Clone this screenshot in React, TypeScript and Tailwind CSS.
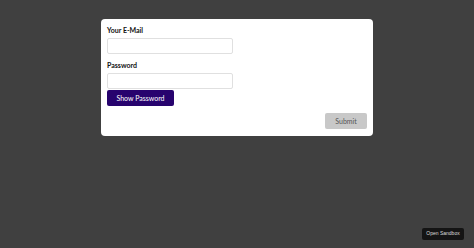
import React from "react";

export default function App() {
  return (
    <div
      className="relative min-h-[248px] w-full bg-[#404040] pt-[19px]"
      style={{ fontFamily: 'Lato, "Noto Sans", sans-serif' }}
    >
      <div className="mx-auto w-[272px] rounded-[4px] bg-white px-[6px] pt-[6px] pb-[7px]">
        <div className="flex flex-col items-start">
          <label className="text-[7px] font-bold leading-[10px] text-[#111]">Your E-Mail</label>
          <input className="mt-[3px] h-[16px] w-[126px] rounded-[2px] border border-[#e0e0e0] bg-white" />
          <label className="mt-[6px] text-[7px] font-bold leading-[10px] text-[#111]">Password</label>
          <input type="password" className="mt-[3px] h-[16px] w-[126px] rounded-[2px] border border-[#e0e0e0] bg-white" />
          <button className="mt-[1px] h-[16px] w-[67px] rounded-[2px] bg-[#27036e] text-[7px] leading-[16px] text-white">
            Show Password
          </button>
        </div>
        <div className="mt-[7px] flex justify-end">
          <button className="h-[16px] w-[42px] rounded-[2px] bg-[#c8c8c8] text-[7px] leading-[16px] text-[#555]">
            Submit
          </button>
        </div>
      </div>
      <div
        className="absolute right-[10px] bottom-[8px] flex h-[12px] w-[42px] items-center justify-center rounded-[2px] bg-[#141414] text-[5px] text-[#ddd]"
        style={{ fontFamily: '"Liberation Sans", Arial, sans-serif' }}
      >
        Open Sandbox
      </div>
    </div>
  );
}
